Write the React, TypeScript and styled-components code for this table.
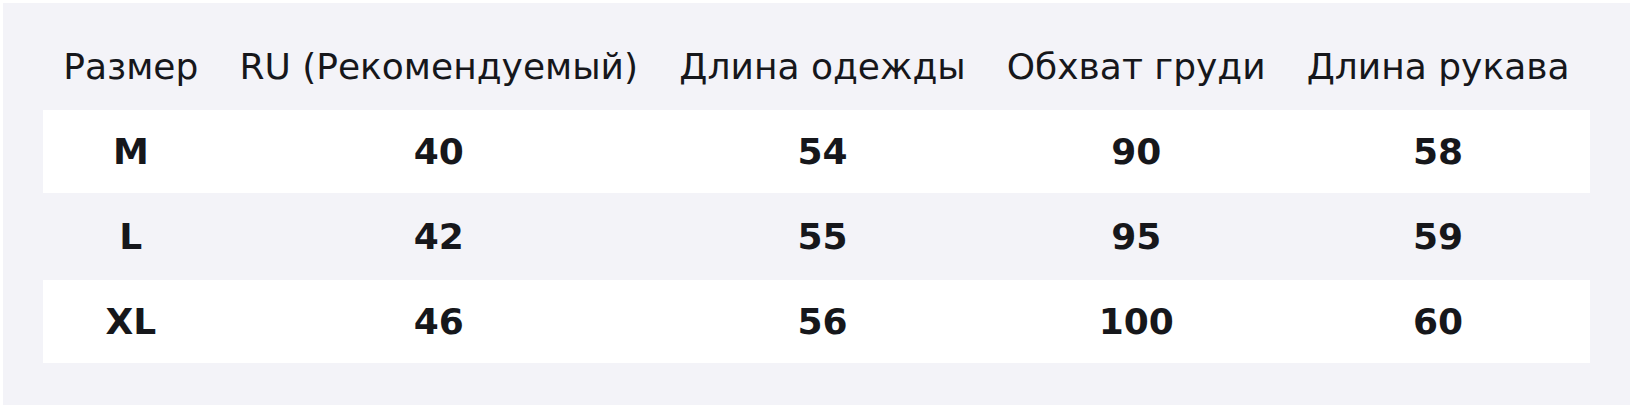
import React from 'react'
import styled, { createGlobalStyle } from 'styled-components'

const GlobalStyle = createGlobalStyle`
  body {
    margin: 3px;
    background: #fff;
    font-family: "DejaVu Sans", "Liberation Sans", sans-serif;
  }
`

const headers = ['Размер', 'RU (Рекомендуемый)', 'Длина одежды', 'Обхват груди', 'Длина рукава']

const rows = [
  ['M', '40', '54', '90', '58'],
  ['L', '42', '55', '95', '59'],
  ['XL', '46', '56', '100', '60'],
]

const App = () => {
  return (
    <>
      <GlobalStyle />
      <Panel>
        <SizeTable>
          <thead>
            <tr>
              {headers.map((h) => (
                <HeadCell key={h}>{h}</HeadCell>
              ))}
            </tr>
          </thead>
          <tbody>
            {rows.map((row, i) => (
              <Row key={row[0]} $striped={i % 2 === 0}>
                {row.map((v, j) => (
                  <Cell key={j}>{v}</Cell>
                ))}
              </Row>
            ))}
          </tbody>
        </SizeTable>
      </Panel>
    </>
  )
}

export default App

const Panel = styled.div`
  background: #f3f3f8;
  padding: 40px;
  height: 402px;
  box-sizing: border-box;
`

const SizeTable = styled.table`
  width: 100%;
  border-collapse: separate;
  border-spacing: 0 2px;
  color: #16171b;
  font-size: 36px;
`

const HeadCell = styled.th`
  font-weight: normal;
  white-space: nowrap;
  text-align: center;
  line-height: 42px;
  padding: 1px 20px 20px;
`

const Row = styled.tr<{ $striped: boolean }>`
  background: ${(p) => (p.$striped ? '#fff' : 'transparent')};
`

const Cell = styled.td`
  font-weight: bold;
  text-align: center;
  white-space: nowrap;
  line-height: 42px;
  padding: 20.5px 20px;
`
